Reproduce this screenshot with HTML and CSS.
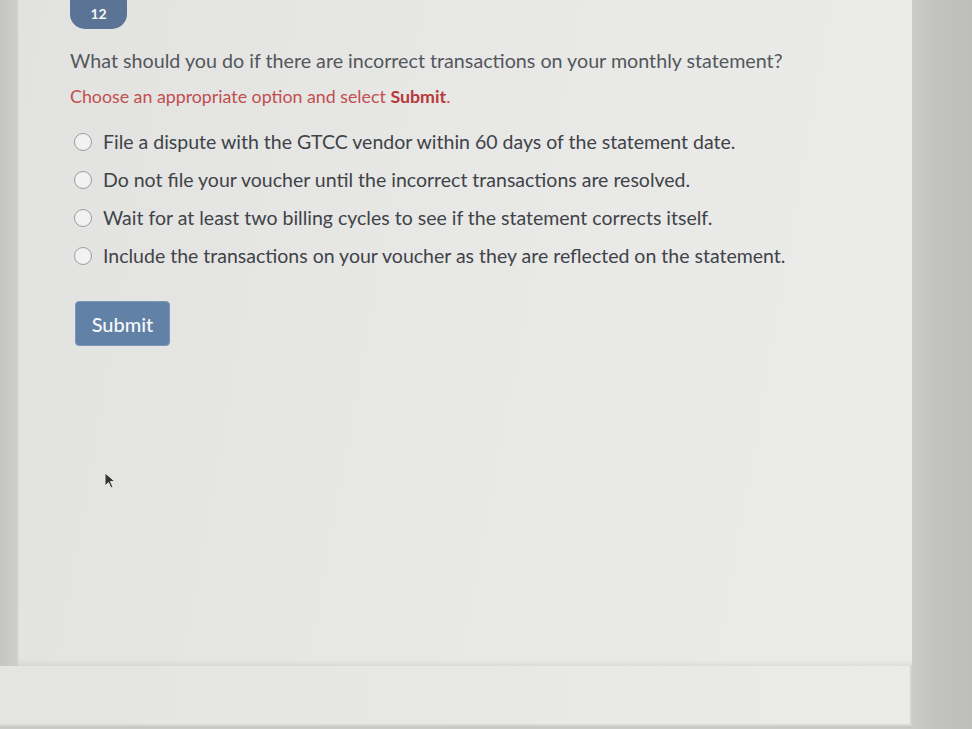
FILE: index.html
```html
<!DOCTYPE html>
<html>
<head>
<meta charset="utf-8">
<link rel="stylesheet" href="styles.css">
</head>
<body>
<div class="screen">
  <div class="left">
    <div class="top">
      <div class="strip"></div>
      <main class="panel">
        <div class="badge">12</div>
        <h1 class="question">What should you do if there are incorrect transactions on your monthly statement?</h1>
        <p class="hint">Choose an appropriate option and select <b>Submit</b>.</p>
        <ul class="options">
          <li class="option"><span class="radio"></span><span>File a dispute with the GTCC vendor within 60 days of the statement date.</span></li>
          <li class="option"><span class="radio"></span><span>Do not file your voucher until the incorrect transactions are resolved.</span></li>
          <li class="option"><span class="radio"></span><span>Wait for at least two billing cycles to see if the statement corrects itself.</span></li>
          <li class="option"><span class="radio"></span><span>Include the transactions on your voucher as they are reflected on the statement.</span></li>
        </ul>
        <button class="submit">Submit</button>
        <svg class="cursor" width="14" height="18" viewBox="0 0 14 18"><path d="M1 1 L1 14 L4.5 10.5 L7 16 L9 15 L6.5 9.5 L11 9.5 Z" fill="#333" stroke="#e8e8e6" stroke-width="1"/></svg>
      </main>
    </div>
    <div class="bottom"></div>
  </div>
  <div class="right"></div>
</div>
</body>
</html>
```
FILE: styles.css
```css
html, body {
  margin: 0;
  padding: 0;
  width: 972px;
  height: 729px;
  overflow: hidden;
  background: #c9cac8;
  font-family: Lato, "Open Sans", sans-serif;
}
.screen {
  display: flex;
  width: 972px;
  height: 729px;
}
.left {
  width: 912px;
  display: flex;
  flex-direction: column;
}
.top {
  display: flex;
  height: 666px;
}
.strip {
  width: 18px;
  background: linear-gradient(90deg, #c4c5c3, #cfd0ce);
}
.panel {
  position: relative;
  flex: 1;
  background: linear-gradient(100deg, #e2e2e0 0%, #e8e8e6 50%, #ebebea 100%);
  padding: 0 0 0 52px;
  box-shadow: inset 0 -6px 8px -6px rgba(0,0,0,0.12);
}
.bottom {
  height: 58px;
  background: linear-gradient(90deg, #e4e4e2, #ebebe9);
  border-bottom: 2px solid #d8d9d7;
  border-right: 2px solid #d3d4d2;
}
.right {
  flex: 1;
  background: linear-gradient(90deg, #cbccca, #c2c3c1 40%, #bebfbd);
}
.badge {
  width: 57px;
  height: 30px;
  margin-top: -1px;
  background: #5b7496;
  color: #f4f6f8;
  font-weight: 700;
  font-size: 14px;
  border-radius: 0 0 15px 15px;
  display: flex;
  align-items: center;
  justify-content: center;
  padding-bottom: 2px;
  box-sizing: border-box;
}
.question {
  margin: 20px 0 0 0;
  font-size: 19.7px;
  font-weight: 400;
  color: #53575c;
  line-height: 24px;
}
.hint {
  margin: 12px 0 0 0;
  font-size: 17.8px;
  color: #c24e4f;
  line-height: 22px;
}
.hint b {
  font-weight: 700;
  color: #b8393b;
}
.options {
  list-style: none;
  margin: 23px 0 0 0;
  padding: 0;
  display: flex;
  flex-direction: column;
  gap: 14px;
}
.option {
  display: flex;
  align-items: center;
  gap: 11px;
  font-size: 19.5px;
  color: #404348;
  line-height: 24px;
}
.radio {
  width: 16px;
  height: 16px;
  border: 1.5px solid #9a9c9f;
  border-radius: 50%;
  background: #f2f2f1;
  flex: none;
  margin-left: 4px;
}
.submit {
  margin-top: 33px;
  width: 95px;
  height: 45px;
  background: #6281a6;
  border: 1px solid #7b95b4;
  border-radius: 4px;
  color: #f7f8fa;
  font-family: Lato, sans-serif;
  font-size: 20px;
  font-weight: 500;
  margin-left: 5px;
}
.cursor {
  position: absolute;
  left: 86px;
  top: 472px;
}
```
